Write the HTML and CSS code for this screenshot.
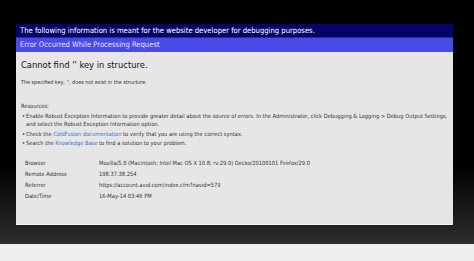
FILE: index.html
```html
<!doctype html>
<html lang="en">
<head>
    <meta charset="UTF-8">
    <title>Error Occurred While Processing Request</title>
    <link rel="stylesheet" href="styles.css">
</head>
<body>

<div class="stage">
    <div class="panel">
        <div class="dev-note">The following information is meant for the website developer for debugging purposes.</div>
        <div class="title-bar">Error Occurred While Processing Request</div>

        <div class="content">
            <h1>Cannot find '' key in structure.</h1>
            <p class="detail">The specified key, '', does not exist in the structure.</p>

            <p class="resources">Resources:</p>
            <ul class="tips">
                <li>Enable Robust Exception Information to provide greater detail about the source of errors. In the Administrator, click Debugging &amp; Logging &gt; Debug Output Settings, and select the Robust Exception Information option.</li>
                <li>Check the <a href="#">ColdFusion documentation</a> to verify that you are using the correct syntax.</li>
                <li>Search the <a href="#">Knowledge Base</a> to find a solution to your problem.</li>
            </ul>

            <div class="info">
                <div class="row"><span class="label">Browser</span><span>Mozilla/5.0 (Macintosh; Intel Mac OS X 10.8; rv:29.0) Gecko/20100101 Firefox/29.0</span></div>
                <div class="row"><span class="label">Remote Address</span><span>198.37.38.254</span></div>
                <div class="row"><span class="label">Referrer</span><span>https://account.avid.com/index.cfm?navid=579</span></div>
                <div class="row"><span class="label">Date/Time</span><span>16-May-14 03:46 PM</span></div>
            </div>
        </div>
    </div>
</div>

</body>
</html>
```

FILE: styles.css
```css
body {
    margin: 0;
    background: #efefef;
    font-family: "DejaVu Sans Condensed", "DejaVu Sans", sans-serif;
}

.stage {
    height: 244px;
    box-sizing: border-box;
    padding: 24px 21px 0 16px;
    background: linear-gradient(#000 0, #000 68%, #2d2d2d 100%);
}

.panel {
    height: 201px;
    display: flex;
    flex-direction: column;
    border-bottom: 1px solid #f4f4f4;
    box-sizing: border-box;
}

.dev-note {
    height: 14px;
    line-height: 14px;
    padding-left: 4px;
    background: #03036a;
    color: #fff;
    font-size: 7.6px;
    border-bottom: 1px solid #2a2a8a;
    box-sizing: border-box;
}

.title-bar {
    height: 14px;
    line-height: 14px;
    padding-left: 4px;
    background: #4a4ae8;
    color: #e4e4ff;
    font-size: 7.6px;
}

.content {
    flex: 1;
    background: #e6e6e6;
    color: #333;
    padding: 7px 5px 0 5px;
    font-size: 5.7px;
}

h1 {
    margin: 0;
    font-size: 9.3px;
    line-height: 12px;
    font-weight: normal;
    color: #111;
}

.detail {
    margin: 7px 0 0 0;
    line-height: 8px;
    font-size: 5.4px;
}

.resources {
    margin: 16px 0 0 0;
    line-height: 8px;
}

.tips {
    list-style: none;
    margin: 2px 0 0 0;
    padding: 0 0 0 5px;
}

.tips li {
    position: relative;
    line-height: 8px;
    margin-bottom: 1.5px;
}

.tips li::before {
    content: "\2022";
    position: absolute;
    left: -4px;
}

.tips a {
    color: #3a6fd0;
    text-decoration: none;
}

.info {
    margin: 11px 0 0 4px;
}

.row {
    display: flex;
    height: 11px;
    line-height: 11px;
}

.label {
    width: 74px;
}
```
